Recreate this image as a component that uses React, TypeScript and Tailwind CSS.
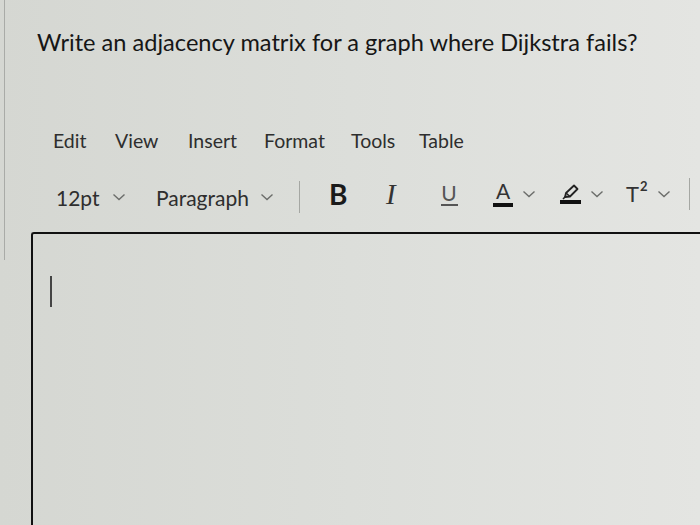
import React from "react";

const Chevron = ({ w = 14 }: { w?: number }) => (
  <svg width={w} height="8" viewBox="0 0 14 8" className="shrink-0">
    <path d="M1.5 1.5 L7 6.5 L12.5 1.5" fill="none" stroke="#6b6d6a" strokeWidth="1.4" />
  </svg>
);

const lato = { fontFamily: "Lato, 'Open Sans', sans-serif" } as const;

export default function App() {
  return (
    <div
      className="w-[700px] h-[525px] overflow-hidden relative bg-linear-to-r from-[#d5d7d2] via-[#dcdeda] to-[#e4e5e2] text-[#1c1c1c]"
      style={lato}
    >
      <div className="absolute left-[4px] top-0 h-[260px] w-[1px] bg-[#a9aba7]" />
      <div className="pl-[37px] pt-[26px]">
        <h1 className="text-[23.6px] leading-[32px] font-normal text-[#161616] whitespace-nowrap">
          Write an adjacency matrix for a graph where Dijkstra fails?
        </h1>
      </div>

      <div className="flex items-center pl-[53px] mt-[71px] text-[19.5px] leading-[24px] text-[#2e2e2e]">
        <span className="w-[62px]">Edit</span>
        <span className="w-[73px]">View</span>
        <span className="w-[76px]">Insert</span>
        <span className="w-[87px]">Format</span>
        <span className="w-[68px]">Tools</span>
        <span>Table</span>
      </div>

      <div className="flex items-center pl-[56px] mt-[27px] h-[34px] text-[21px] text-[#2e2e2e]">
        <span className="w-[55px] leading-none">12pt</span>
        <Chevron w={16} />
        <span className="ml-[29px] w-[103px] leading-none">Paragraph</span>
        <Chevron w={16} />
        <div className="ml-[24px] w-[1px] h-[32px] bg-[#a5a7a3]" />
        <span className="ml-[29px] w-[20px] text-[28px] font-bold text-[#1a1a1a] leading-none -mt-[6px]">B</span>
        <span
          className="ml-[37px] w-[18px] text-[29px] italic leading-none text-[#333] -mt-[6px]"
          style={{ fontFamily: "'Liberation Serif', serif" }}
        >
          I
        </span>
        <span className="ml-[36px] w-[18px] flex flex-col items-center leading-none -mt-[6px]">
          <span className="text-[21px] text-[#555] leading-none">U</span>
          <span className="mt-[1px] w-[17px] h-[1.5px] bg-[#555]" />
        </span>
        <span className="ml-[35px] w-[20px] flex flex-col items-center leading-none -mt-[8px]">
          <span className="text-[21px] text-[#333] leading-none">A</span>
          <span className="mt-[2px] w-[20px] h-[4px] bg-[#111]" />
        </span>
        <span className="ml-[9px] -mt-[6px]"><Chevron /></span>
        <span className="ml-[24px] w-[21px] flex flex-col items-center -mt-[8px]">
          <svg width="21" height="17" viewBox="0 0 21 17">
            <path d="M5 14 L6 10 L14 2.5 L17.5 6 L10 13.5 Z" fill="none" stroke="#222" strokeWidth="1.8" strokeLinejoin="round" />
            <path d="M6 10 L10 13.5" stroke="#222" strokeWidth="1.5" />
            <path d="M3 16 L5.5 13.5" stroke="#222" strokeWidth="1.6" />
          </svg>
          <span className="mt-[0px] w-[21px] h-[4px] bg-[#111]" />
        </span>
        <span className="ml-[9px] -mt-[6px]"><Chevron /></span>
        <span className="ml-[22px] w-[24px] text-[22px] text-[#333] leading-none relative -mt-[6px]">
          T<span className="absolute left-[14px] -top-[3px] text-[13px] font-bold">2</span>
        </span>
        <span className="ml-[7px] -mt-[6px]"><Chevron /></span>
        <div className="ml-[18px] w-[1px] h-[32px] bg-[#a5a7a3] -mt-[6px]" />
      </div>

      <div className="ml-[31px] mt-[18px] h-[320px] border-l-[2.5px] border-t-[2.5px] border-[#111] rounded-tl-[3px] relative">
        <div className="absolute left-[17px] top-[42px] w-[1.5px] h-[31px] bg-[#444]" />
      </div>
    </div>
  );
}
